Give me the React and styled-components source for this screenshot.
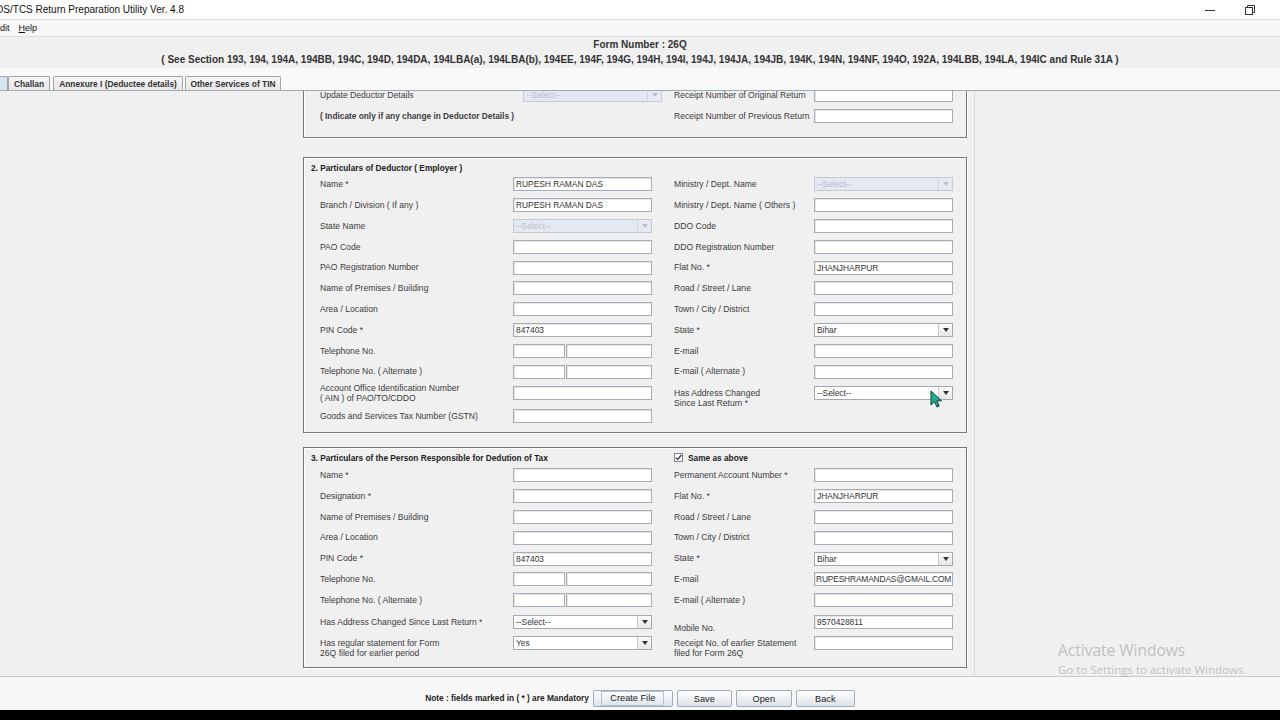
import React from 'react'
import styled, { createGlobalStyle } from 'styled-components'

const GlobalStyle = createGlobalStyle`
  html, body {
    margin: 0;
    padding: 0;
  }
  body {
    width: 1280px;
    height: 720px;
    overflow: hidden;
    background: #f0f0f0;
    font-family: "Liberation Sans", Arial, sans-serif;
  }
`

const Window = styled.div`
  position: relative;
  width: 1280px;
  height: 720px;
  display: flex;
  flex-direction: column;
  overflow: hidden;
  background: #f0f0f0;
`

const TitleBar = styled.div`
  height: 19px;
  flex: none;
  display: flex;
  align-items: center;
  justify-content: space-between;
  background: #ffffff;
  border-bottom: 1px solid #d9d9d9;
`

const TitleText = styled.div`
  margin-left: -10px;
  font-size: 10px;
  color: #111;
  white-space: nowrap;
`

const WinButtons = styled.div`
  display: flex;
  padding-right: 10px;
`

const WinButton = styled.div`
  width: 40px;
  height: 19px;
  display: flex;
  align-items: center;
  justify-content: center;
`

const MenuBar = styled.div`
  height: 17px;
  flex: none;
  display: flex;
  align-items: center;
  gap: 9px;
  background: #f7f7f7;
  border-bottom: 1px solid #dcdcdc;
  box-sizing: border-box;
  font-size: 9px;
  color: #111;
`

const MenuItem = styled.div`
  margin-left: ${p => p.$ml || 0}px;
  span { text-decoration: underline; }
`

const Header = styled.div`
  height: 31px;
  flex: none;
  display: flex;
  flex-direction: column;
  align-items: center;
  font-weight: bold;
  font-size: 10px;
  color: #333;
`

const HeaderLine = styled.div`
  line-height: 14px;
  margin-top: ${p => p.$mt || 0}px;
  white-space: nowrap;
`

const TabStrip = styled.div`
  height: 22px;
  flex: none;
  display: flex;
  align-items: flex-end;
  background: #f9f9f9;
`

const Tab = styled.div`
  width: ${p => p.$w}px;
  margin-left: ${p => p.$ml || 0}px;
  height: 14px;
  box-sizing: border-box;
  display: flex;
  align-items: center;
  justify-content: center;
  border: 1px solid #a3a3a3;
  border-bottom: none;
  border-radius: 2px 2px 0 0;
  background: ${p => (p.$active ? '#d7e4f2' : 'linear-gradient(#f7f7f7, #e6e6e6)')};
  font-size: 8.4px;
  font-weight: bold;
  color: #333;
  white-space: nowrap;
`

const Viewport = styled.div`
  flex: 1;
  display: flex;
  border-top: 1px solid #9fa9b4;
  overflow: hidden;
`

const Panel = styled.div`
  width: 975px;
  box-sizing: border-box;
  padding-left: 303px;
  border-right: 1px solid #d8d8d8;
  display: flex;
  flex-direction: column;
  flex: none;
`

const Section = styled.div`
  width: 664px;
  flex: none;
  box-sizing: border-box;
  border: 1px solid #767676;
  box-shadow: inset 1px 1px 0 #ffffff, 1px 1px 0 #ffffff;
  margin-top: ${p => p.$mt}px;
  padding-bottom: ${p => p.$pb}px;
`

const SectionTitle = styled.div`
  display: grid;
  grid-template-columns: 363px auto;
  align-items: center;
  height: 12px;
  padding: 4px 0 ${p => p.$pb || 0}px 7px;
  font-size: 8.3px;
  font-weight: bold;
  color: #222;
`

const CheckWrap = styled.div`
  display: flex;
  align-items: center;
  gap: 5px;
`

const CheckBox = styled.div`
  width: 9px;
  height: 9px;
  box-sizing: border-box;
  border: 1px solid #7d8690;
  background: #fff;
  display: flex;
  align-items: center;
  justify-content: center;
`

const Row = styled.div`
  display: flex;
  gap: 22px;
  padding-left: 16px;
  height: ${p => p.$h || 20.8}px;
  box-sizing: border-box;
`

const Half = styled.div`
  display: grid;
  grid-template-columns: ${p => (p.$right ? '140px 139px' : '193px 139px')};
  align-items: ${p => (p.$top ? 'start' : 'center')};
`

const Label = styled.div`
  font-size: ${p => (p.$bold ? 8.3 : 8.6)}px;
  line-height: 10.5px;
  color: #3c3c3c;
  font-weight: ${p => (p.$bold ? 'bold' : 'normal')};
  padding-top: ${p => p.$pt || 0}px;
  white-space: nowrap;
`

const TextBox = styled.div`
  width: ${p => p.$w || 139}px;
  height: 14px;
  box-sizing: border-box;
  border: 1px solid #a7aeb7;
  box-shadow: inset 1px 1px 0 #e4e7ea;
  background: #ffffff;
  font-size: 8.4px;
  letter-spacing: ${p => (p.$tight ? '-0.15px' : 'normal')};
  line-height: 12px;
  padding: 0 ${p => (p.$tight ? 1 : 2)}px;
  color: #333;
  white-space: nowrap;
  overflow: hidden;
  margin-top: ${p => p.$mt || 0}px;
`

const Split = styled.div`
  display: flex;
  gap: 1px;
  margin-top: ${p => p.$mt || 0}px;
`

const SelectBox = styled.div`
  width: 139px;
  height: 14px;
  box-sizing: border-box;
  display: flex;
  border: 1px solid ${p => (p.$disabled ? '#c3cad6' : '#a2a9b3')};
  background: ${p => (p.$disabled ? '#e4e8f0' : '#ffffff')};
  margin-top: ${p => p.$mt || 0}px;
  margin-left: ${p => p.$ml || 0}px;
`

const SelectText = styled.div`
  flex: 1;
  font-size: 8.4px;
  line-height: 12px;
  padding: 0 2px;
  color: ${p => (p.$disabled ? '#b6bfcd' : '#333')};
  white-space: nowrap;
`

const Arrow = styled.div`
  width: 13px;
  border-left: 1px solid ${p => (p.$disabled ? '#cfd5df' : '#c4c9cf')};
  background: ${p => (p.$disabled ? '#e7ebf1' : 'linear-gradient(#fbfbfb, #e8e8e8)')};
  display: flex;
  align-items: center;
  justify-content: center;
  &::after {
    content: '';
    border-left: 3.5px solid transparent;
    border-right: 3.5px solid transparent;
    border-top: 4px solid ${p => (p.$disabled ? '#b8c0cc' : '#333')};
  }
`

const Footer = styled.div`
  height: 34px;
  flex: none;
  box-sizing: border-box;
  border-top: 1px solid #c9c9c9;
  background: #f7f7f7;
  display: flex;
  justify-content: center;
  align-items: flex-start;
  padding-top: 13px;
  gap: 4px;
`

const Note = styled.div`
  font-size: 8.3px;
  font-weight: bold;
  color: #222;
  line-height: 17px;
`

const Button = styled.div`
  width: ${p => p.$w}px;
  height: 17px;
  box-sizing: border-box;
  border: 1px solid #a2abb5;
  border-radius: 2px;
  background: linear-gradient(#ffffff, #dde3ea);
  display: flex;
  align-items: center;
  justify-content: center;
  font-size: 9.2px;
  color: #222;
`

const Focus = styled.span`
  border: 1px solid #b3c0cf;
  padding: 1px 8px;
  line-height: 11px;
`

const BlackBar = styled.div`
  height: 10px;
  flex: none;
  background: #000;
`

const Watermark = styled.div`
  position: absolute;
  left: 1058px;
  top: 640px;
  color: rgba(140, 140, 140, 0.5);
  font-family: "Open Sans", "Noto Sans", sans-serif;
  pointer-events: none;
`

const WmBig = styled.div`
  font-size: 15.5px;
  line-height: 20px;
`

const WmSmall = styled.div`
  font-size: 11.5px;
  line-height: 16px;
  margin-top: 2px;
`

const Cursor = styled.svg`
  position: absolute;
  left: 930px;
  top: 390px;
`

const Select = ({ value = '--Select--', disabled, mt, ml }) => (
  <SelectBox $disabled={disabled} $mt={mt} $ml={ml}>
    <SelectText $disabled={disabled}>{value}</SelectText>
    <Arrow $disabled={disabled} />
  </SelectBox>
)

const Phone = ({ mt }) => (
  <Split $mt={mt}>
    <TextBox $w={52} />
    <TextBox $w={86} />
  </Split>
)

const Field = ({ label, children, right }) => (
  <Half $right={right}>
    <Label>{label}</Label>
    {children}
  </Half>
)

const Pair = ({ l, lc, r, rc }) => (
  <Row>
    <Field label={l}>{lc || <TextBox />}</Field>
    <Field right label={r}>{rc || <TextBox />}</Field>
  </Row>
)

const sections =
  '( See Section 193, 194, 194A, 194BB, 194C, 194D, 194DA, 194LBA(a), 194LBA(b), 194EE, 194F, 194G, 194H, 194I, 194J, 194JA, 194JB, 194K, 194N, 194NF, 194O, 192A, 194LBB, 194LA, 194IC and Rule 31A )'

export default function App() {
  return (
    <Window>
      <GlobalStyle />
      <TitleBar>
        <TitleText>TDS/TCS Return Preparation Utility Ver. 4.8</TitleText>
        <WinButtons>
          <WinButton>
            <svg width="10" height="10" viewBox="0 0 10 10">
              <line x1="0" y1="5.5" x2="10" y2="5.5" stroke="#333" strokeWidth="1" />
            </svg>
          </WinButton>
          <WinButton>
            <svg width="10" height="10" viewBox="0 0 10 10" fill="none" stroke="#333" strokeWidth="1">
              <rect x="0.5" y="2.5" width="7" height="7" />
              <path d="M2.5 2.5V0.5H9.5V7.5H7.5" />
            </svg>
          </WinButton>
        </WinButtons>
      </TitleBar>

      <MenuBar>
        <MenuItem $ml={-6}><span>E</span>dit</MenuItem>
        <MenuItem><span>H</span>elp</MenuItem>
      </MenuBar>

      <Header>
        <HeaderLine $mt={1}>Form Number : 26Q</HeaderLine>
        <HeaderLine $mt={1}>{sections}</HeaderLine>
      </Header>

      <TabStrip>
        <Tab $w={10} $ml={-2} $active />
        <Tab $w={42}>Challan</Tab>
        <Tab $w={130} $ml={3}>Annexure I (Deductee details)</Tab>
        <Tab $w={96} $ml={2}>Other Services of TIN</Tab>
      </TabStrip>

      <Viewport>
        <Panel>
          <Section $mt={-7.4} $pb={10.8}>
            <Row>
              <Field label="Update Deductor Details">
                <Select disabled ml={10} />
              </Field>
              <Field right label="Receipt Number of Original Return">
                <TextBox />
              </Field>
            </Row>
            <Row>
              <Half>
                <Label $bold>( Indicate only if any change in Deductor Details )</Label>
                <div />
              </Half>
              <Field right label="Receipt Number of Previous Return">
                <TextBox />
              </Field>
            </Row>
          </Section>

          <Section $mt={19} $pb={5.2}>
            <SectionTitle>
              <div>2. Particulars of Deductor ( Employer )</div>
            </SectionTitle>
            <Pair
              l="Name *"
              lc={<TextBox>RUPESH RAMAN DAS</TextBox>}
              r="Ministry / Dept. Name"
              rc={<Select disabled />}
            />
            <Pair l="Branch / Division ( If any )" lc={<TextBox>RUPESH RAMAN DAS</TextBox>} r="Ministry / Dept. Name ( Others )" />
            <Pair l="State Name" lc={<Select disabled />} r="DDO Code" />
            <Pair l="PAO Code" r="DDO Registration Number" />
            <Pair l="PAO Registration Number" r="Flat No. *" rc={<TextBox>JHANJHARPUR</TextBox>} />
            <Pair l="Name of Premises / Building" r="Road / Street / Lane" />
            <Pair l="Area / Location" r="Town / City / District" />
            <Pair l="PIN Code *" lc={<TextBox>847403</TextBox>} r="State *" rc={<Select value="Bihar" />} />
            <Pair l="Telephone No." lc={<Phone />} r="E-mail" />
            <Pair l="Telephone No. ( Alternate )" lc={<Phone />} r="E-mail ( Alternate )" />
            <Row $h={24}>
              <Half $top>
                <Label $pt={1}>
                  Account Office Identification Number
                  <br />( AIN ) of PAO/TO/CDDO
                </Label>
                <TextBox $mt={4} />
              </Half>
              <Half $right $top>
                <Label $pt={6}>
                  Has Address Changed
                  <br />Since Last Return *
                </Label>
                <Select mt={4} />
              </Half>
            </Row>
            <Row>
              <Field label="Goods and Services Tax Number (GSTN)">
                <TextBox />
              </Field>
            </Row>
          </Section>

          <Section $mt={14} $pb={7.6}>
            <SectionTitle $pb={1}>
              <div>3. Particulars of the Person Responsible for Dedution of Tax</div>
              <CheckWrap>
                <CheckBox>
                  <svg width="7" height="7" viewBox="0 0 7 7">
                    <path d="M0.8 3.6L2.7 5.6L6.2 1" fill="none" stroke="#2a3440" strokeWidth="1.3" />
                  </svg>
                </CheckBox>
                <span>Same as above</span>
              </CheckWrap>
            </SectionTitle>
            <Pair l="Name *" r="Permanent Account Number *" />
            <Pair l="Designation *" r="Flat No. *" rc={<TextBox>JHANJHARPUR</TextBox>} />
            <Pair l="Name of Premises / Building" r="Road / Street / Lane" />
            <Pair l="Area / Location" r="Town / City / District" />
            <Pair l="PIN Code *" lc={<TextBox>847403</TextBox>} r="State *" rc={<Select value="Bihar" />} />
            <Pair l="Telephone No." lc={<Phone />} r="E-mail" rc={<TextBox $tight>RUPESHRAMANDAS@GMAIL.COM</TextBox>} />
            <Pair l="Telephone No. ( Alternate )" lc={<Phone />} r="E-mail ( Alternate )" />
            <Row>
              <Half $top>
                <Label $pt={6}>Has Address Changed Since Last Return *</Label>
                <Select mt={4.4} />
              </Half>
              <Half $right $top>
                <Label $pt={12}>Mobile No.</Label>
                <TextBox $mt={4.4}>9570428811</TextBox>
              </Half>
            </Row>
            <Row $h={28}>
              <Half $top>
                <Label $pt={6.3}>
                  Has regular statement for Form
                  <br />26Q filed for earlier period
                </Label>
                <Select value="Yes" mt={4.6} />
              </Half>
              <Half $right $top>
                <Label $pt={6.3}>
                  Receipt No. of earlier Statement
                  <br />filed for Form 26Q
                </Label>
                <TextBox $mt={4.6} />
              </Half>
            </Row>
          </Section>
        </Panel>
      </Viewport>

      <Footer>
        <Note>Note : fields marked in ( * ) are Mandatory</Note>
        <Button $w={80}><Focus>Create File</Focus></Button>
        <Button $w={55}>Save</Button>
        <Button $w={56}>Open</Button>
        <Button $w={59}>Back</Button>
      </Footer>
      <BlackBar />

      <Watermark>
        <WmBig>Activate Windows</WmBig>
        <WmSmall>Go to Settings to activate Windows.</WmSmall>
      </Watermark>

      <Cursor width="12" height="18" viewBox="0 0 12 18">
        <path d="M1 1V15L4.5 11.6L7 17L9.2 16L6.8 10.8H11.5Z" fill="#1fae8e" stroke="#0d3b33" strokeWidth="1" strokeLinejoin="round" />
      </Cursor>
    </Window>
  )
}
